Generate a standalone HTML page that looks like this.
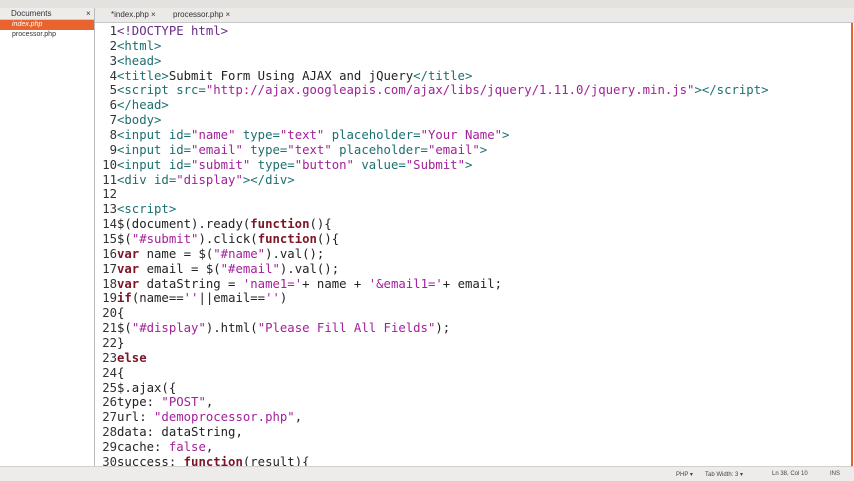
<!DOCTYPE html><html><head><style>
body{margin:0;width:854px;height:480px;overflow:hidden;background:#fff;position:relative;font-family:"Liberation Sans",sans-serif}
#top{position:absolute;left:0;top:0;width:854px;height:8px;background:#e4e2de}
#side{position:absolute;left:0;top:8px;width:94px;height:458px;background:#fff;border-right:1px solid #bbb}
#sh{height:11px;background:#ececea;font-size:8px;line-height:11px;padding-left:11px;color:#333;border-bottom:1px solid #ccc}
.f{font-size:7px;line-height:10px;padding-left:12px;color:#333}
.sel{background:#e8632e;color:#fff;font-style:italic}
#tabs{position:absolute;left:95px;top:8px;width:759px;height:14px;background:#ebeae8;border-bottom:1px solid #c8c8c8;font-size:8px;line-height:14px;color:#333}
#tabs span{position:absolute;top:0}
#code{position:absolute;left:95px;top:23px;width:756px;height:443px;background:#fff;border-right:2px solid #e8632e;overflow:hidden}
pre{margin:0;position:absolute;left:0;top:1px;font-family:"DejaVu Sans Mono","Liberation Mono",monospace;font-size:12.3px;line-height:14.86px;color:#222}
.n{display:inline-block;width:22px;text-align:right;color:#333}
.t{color:#1c6f6f}.s{color:#a3209b}.k{color:#7d1526;font-weight:bold}.d{color:#6a2b86}
#status{position:absolute;left:0;top:466px;width:854px;height:14px;background:#edecea;border-top:1px solid #d0d0d0;font-size:6px;color:#444}
#status span{position:absolute;top:4px}
</style></head><body>
<div id="top"></div>
<div id="side"><div id="sh">Documents<span style="position:absolute;left:86px">×</span></div>
<div class="f sel">index.php</div><div class="f">processor.php</div></div>
<div id="tabs"><span style="left:16px">*index.php ×</span><span style="left:78px">processor.php ×</span></div>
<div id="code"><pre>
<span class="n">1</span><span class="d">&lt;!DOCTYPE html&gt;</span>
<span class="n">2</span><span class="t">&lt;html&gt;</span>
<span class="n">3</span><span class="t">&lt;head&gt;</span>
<span class="n">4</span><span class="t">&lt;title&gt;</span>Submit Form Using AJAX and jQuery<span class="t">&lt;/title&gt;</span>
<span class="n">5</span><span class="t">&lt;script src=</span><span class="s">"http://ajax.googleapis.com/ajax/libs/jquery/1.11.0/jquery.min.js"</span><span class="t">&gt;&lt;/script&gt;</span>
<span class="n">6</span><span class="t">&lt;/head&gt;</span>
<span class="n">7</span><span class="t">&lt;body&gt;</span>
<span class="n">8</span><span class="t">&lt;input id=</span><span class="s">"name"</span><span class="t"> type=</span><span class="s">"text"</span><span class="t"> placeholder=</span><span class="s">"Your Name"</span><span class="t">&gt;</span>
<span class="n">9</span><span class="t">&lt;input id=</span><span class="s">"email"</span><span class="t"> type=</span><span class="s">"text"</span><span class="t"> placeholder=</span><span class="s">"email"</span><span class="t">&gt;</span>
<span class="n">10</span><span class="t">&lt;input id=</span><span class="s">"submit"</span><span class="t"> type=</span><span class="s">"button"</span><span class="t"> value=</span><span class="s">"Submit"</span><span class="t">&gt;</span>
<span class="n">11</span><span class="t">&lt;div id=</span><span class="s">"display"</span><span class="t">&gt;&lt;/div&gt;</span>
<span class="n">12</span>
<span class="n">13</span><span class="t">&lt;script&gt;</span>
<span class="n">14</span>$(document).ready(<span class="k">function</span>(){
<span class="n">15</span>$(<span class="s">"#submit"</span>).click(<span class="k">function</span>(){
<span class="n">16</span><span class="k">var</span> name = $(<span class="s">"#name"</span>).val();
<span class="n">17</span><span class="k">var</span> email = $(<span class="s">"#email"</span>).val();
<span class="n">18</span><span class="k">var</span> dataString = <span class="s">'name1='</span>+ name + <span class="s">'&amp;email1='</span>+ email;
<span class="n">19</span><span class="k">if</span>(name==<span class="s">''</span>||email==<span class="s">''</span>)
<span class="n">20</span>{
<span class="n">21</span>$(<span class="s">"#display"</span>).html(<span class="s">"Please Fill All Fields"</span>);
<span class="n">22</span>}
<span class="n">23</span><span class="k">else</span>
<span class="n">24</span>{
<span class="n">25</span>$.ajax({
<span class="n">26</span>type: <span class="s">"POST"</span>,
<span class="n">27</span>url: <span class="s">"demoprocessor.php"</span>,
<span class="n">28</span>data: dataString,
<span class="n">29</span>cache: <span class="s">false</span>,
<span class="n">30</span>success: <span class="k">function</span>(result){
</pre></div>
<div id="status"><span style="left:676px">PHP ▾</span><span style="left:705px">Tab Width: 3 ▾</span><span style="left:772px">Ln 38, Col 10</span><span style="left:830px">INS</span></div>
</body></html>
